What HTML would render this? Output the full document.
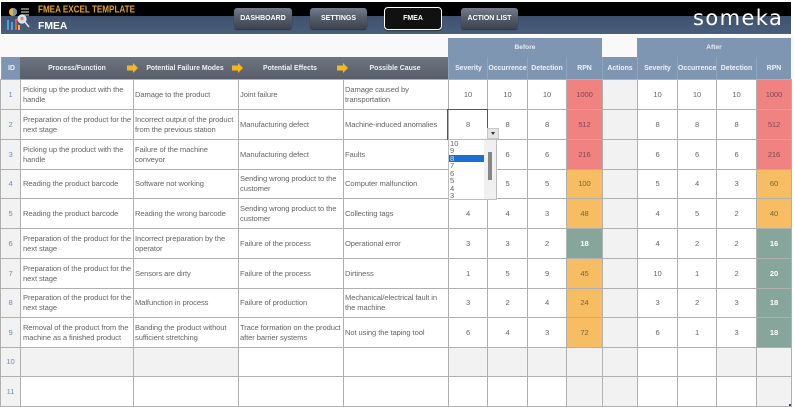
<!DOCTYPE html>
<html><head><meta charset="utf-8"><style>
html,body{margin:0;padding:0;background:#fff}
#r{position:relative;width:794px;height:407px;overflow:hidden;background:#fff;font-family:"Liberation Sans",sans-serif;filter:blur(.3px)}
#r div,#r span{position:absolute}
.bt{height:21px;border-radius:3px;background:linear-gradient(#757c8a,#565d6b 45%,#3d4350);color:#fff;font-weight:bold;font-size:7px;line-height:21px;text-align:center;box-shadow:0 1px 1px #2c3440}
table{position:absolute;left:0;top:79px;width:791px;border-collapse:collapse;table-layout:fixed;font-size:7.6px;letter-spacing:-.1px;line-height:10px;color:#666}
td{border:1px solid #b0b0b0;padding:0 0 0 1px;background:#fff;overflow:hidden;white-space:nowrap}
td:nth-child(2){padding-left:2px}
td.c{text-align:center;padding:0}
td.g{background:#f2f2f2}
td.i{text-align:center;padding:0;background:#f2f2f2;color:#6f8abd}
td.R{background:#f18282;color:#7a4b52;text-align:center;padding:0}
td.O{background:#f6bd62;color:#77663c;text-align:center;padding:0}
td.N{background:#86a59b;color:#fff;text-align:center;padding:0;font-weight:bold}
.h{top:57px;height:23px;line-height:24px;font-size:6.9px;font-weight:bold;text-align:center;color:#eef1f6;white-space:nowrap}
.hd{background:linear-gradient(#6d7480,#565d6a)}
.hb{background:#7f96b2;border-left:1px solid #90a4bc}
.b2{top:38px;height:19px;line-height:19px;background:#7f96b2;color:#e6ebf2;font-size:6.6px;font-weight:bold;text-align:center}
.li{left:450px;font-size:7.6px;line-height:8px;color:#666}
</style></head><body><div id="r">
<div style="left:0;top:35px;width:794px;height:44px;background:#f9f9f9"></div>
<div style="left:1px;top:2px;width:790px;height:14px;background:#000"></div>
<div style="left:1px;top:16px;width:790px;height:18px;background:linear-gradient(#3e5270,#4a5f7c)"></div>
<svg style="position:absolute;left:6px;top:5px" width="26" height="28" viewBox="0 0 26 28">
<circle cx="7" cy="7" r="4" fill="#f0b040"/><path d="M7 7V3a4 4 0 0 1 0 8z" fill="#5a9bd8"/>
<path d="M15 4h8M15 7h8M15 10h8" stroke="#9a9a8a" stroke-width="1.5"/>
<path d="M2 15v10" stroke="#4aa3df" stroke-width="2"/><path d="M6 17v8" stroke="#4aa3df" stroke-width="2"/><path d="M10 14v11" stroke="#e05a4a" stroke-width="2"/>
<circle cx="16" cy="14" r="4" fill="#cfe0ee" stroke="#e8e8e8" stroke-width="1.2"/><circle cx="16" cy="13.5" r="1.6" fill="#e08a70"/>
<path d="M19 17l4 5" stroke="#e0e0e0" stroke-width="1.6"/><path d="M13 25v-5" stroke="#f0b040" stroke-width="2"/>
</svg>
<div style="left:38px;top:4px;font-size:8.1px;line-height:11px;font-weight:bold;color:#dfa22a;white-space:nowrap;transform:scaleY(1.2)">FMEA EXCEL TEMPLATE</div>
<div style="left:38px;top:21px;font-size:10.4px;line-height:12px;font-weight:bold;color:#fff">FMEA</div>
<div class="bt" style="left:234px;top:8px;width:58px">DASHBOARD</div>
<div class="bt" style="left:310px;top:8px;width:57px">SETTINGS</div>
<div class="bt" style="left:384px;top:7px;width:56px;height:21px;border:1.5px solid #fff;background:#111;border-radius:4px">FMEA</div>
<div class="bt" style="left:461px;top:8px;width:57px">ACTION LIST</div>
<div style="left:693px;top:3px;font-family:'DejaVu Sans',sans-serif;font-size:21px;line-height:30px;color:#fff;letter-spacing:1.4px;white-space:nowrap">someka</div>

<div class="b2" style="left:448px;width:154px">Before</div>
<div class="b2" style="left:637px;width:154px">After</div>
<div class="h hb" style="left:1px;width:19px">ID</div>
<div class="h hd" style="left:20px;width:428px"></div>
<div class="h" style="left:21px;width:112px">Process/Function</div>
<div class="h" style="left:140px;width:90px">Potential Failure Modes</div>
<div class="h" style="left:245px;width:90px">Potential Effects</div>
<div class="h" style="left:350px;width:90px">Possible Cause</div>
<svg style="position:absolute;left:127px;top:63px" width="12" height="10"><path d="M0 2.5h6V0l5 5-5 5V7.500H0z" fill="#f5b81c"/></svg>
<svg style="position:absolute;left:232px;top:63px" width="12" height="10"><path d="M0 2.5h6V0l5 5-5 5V7.500H0z" fill="#f5b81c"/></svg>
<svg style="position:absolute;left:337px;top:63px" width="12" height="10"><path d="M0 2.5h6V0l5 5-5 5V7.500H0z" fill="#f5b81c"/></svg>
<div class="h hb" style="left:448px;width:39px">Severity</div>
<div class="h hb" style="left:487px;width:39px">Occurrence</div>
<div class="h hb" style="left:527px;width:38px">Detection</div>
<div class="h hb" style="left:566px;width:35px">RPN</div>
<div class="h hb" style="left:602px;width:34px">Actions</div>
<div class="h hb" style="left:637px;width:39px">Severity</div>
<div class="h hb" style="left:677px;width:38px">Occurrence</div>
<div class="h hb" style="left:716px;width:39px">Detection</div>
<div class="h hb" style="left:756px;width:34px">RPN</div>

<table>
<colgroup><col style="width:20px"><col style="width:113px"><col style="width:105px"><col style="width:105px"><col style="width:105px"><col style="width:39px"><col style="width:40px"><col style="width:39px"><col style="width:36px"><col style="width:35px"><col style="width:40px"><col style="width:39px"><col style="width:40px"><col style="width:35px"></colgroup>
<tr style="height:30px"><td class="i">1</td><td>Picking up the product with the<br>handle</td><td>Damage to the product</td><td>Joint failure</td><td>Damage caused by<br>transportation</td><td class="c">10</td><td class="c">10</td><td class="c">10</td><td class="R">1000</td><td class="g"></td><td class="c">10</td><td class="c">10</td><td class="c">10</td><td class="R">1000</td></tr>
<tr style="height:30px"><td class="i">2</td><td>Preparation of the product for the<br>next stage</td><td>Incorrect output of the product<br>from the previous station</td><td>Manufacturing defect</td><td>Machine-induced anomalies</td><td class="c">8</td><td class="c">8</td><td class="c">8</td><td class="R">512</td><td class="g"></td><td class="c">8</td><td class="c">8</td><td class="c">8</td><td class="R">512</td></tr>
<tr style="height:30px"><td class="i">3</td><td>Picking up the product with the<br>handle</td><td>Failure of the machine<br>conveyor</td><td>Manufacturing defect</td><td>Faults</td><td class="c">6</td><td class="c">6</td><td class="c">6</td><td class="R">216</td><td class="g"></td><td class="c">6</td><td class="c">6</td><td class="c">6</td><td class="R">216</td></tr>
<tr style="height:29px"><td class="i">4</td><td>Reading the product barcode</td><td>Software not working</td><td>Sending wrong product to the<br>customer</td><td>Computer malfunction</td><td class="c">5</td><td class="c">5</td><td class="c">5</td><td class="O">100</td><td class="g"></td><td class="c">5</td><td class="c">4</td><td class="c">3</td><td class="O">60</td></tr>
<tr style="height:30px"><td class="i">5</td><td>Reading the product barcode</td><td>Reading the wrong barcode</td><td>Sending wrong product to the<br>customer</td><td>Collecting tags</td><td class="c">4</td><td class="c">4</td><td class="c">3</td><td class="O">48</td><td class="g"></td><td class="c">4</td><td class="c">5</td><td class="c">2</td><td class="O">40</td></tr>
<tr style="height:30px"><td class="i">6</td><td>Preparation of the product for the<br>next stage</td><td>Incorrect preparation by the<br>operator</td><td>Failure of the process</td><td>Operational error</td><td class="c">3</td><td class="c">3</td><td class="c">2</td><td class="N">18</td><td class="g"></td><td class="c">4</td><td class="c">2</td><td class="c">2</td><td class="N">16</td></tr>
<tr style="height:30px"><td class="i">7</td><td>Preparation of the product for the<br>next stage</td><td>Sensors are dirty</td><td>Failure of the process</td><td>Dirtiness</td><td class="c">1</td><td class="c">5</td><td class="c">9</td><td class="O">45</td><td class="g"></td><td class="c">10</td><td class="c">1</td><td class="c">2</td><td class="N">20</td></tr>
<tr style="height:29px"><td class="i">8</td><td>Preparation of the product for the<br>next stage</td><td>Malfunction in process</td><td>Failure of production</td><td>Mechanical/electrical fault in<br>the machine</td><td class="c">3</td><td class="c">2</td><td class="c">4</td><td class="O">24</td><td class="g"></td><td class="c">3</td><td class="c">2</td><td class="c">3</td><td class="N">18</td></tr>
<tr style="height:30px"><td class="i">9</td><td>Removal of the product from the<br>machine as a finished product</td><td>Banding the product without<br>sufficient stretching</td><td>Trace formation on the product<br>after barrier systems</td><td>Not using the taping tool</td><td class="c">6</td><td class="c">4</td><td class="c">3</td><td class="O">72</td><td class="g"></td><td class="c">6</td><td class="c">1</td><td class="c">3</td><td class="N">18</td></tr>
<tr style="height:29px"><td class="i">10</td><td class="g"></td><td class="g"></td><td></td><td></td><td class="g"></td><td class="g"></td><td class="g"></td><td class="g"></td><td class="g"></td><td></td><td></td><td class="g"></td><td class="g"></td></tr>
<tr style="height:30px"><td class="i">11</td><td></td><td></td><td></td><td></td><td></td><td></td><td></td><td class="g"></td><td class="g"></td><td></td><td></td><td></td><td class="g"></td></tr>
</table>

<div style="left:447px;top:109px;width:39px;height:29px;border:1px solid #2f6b4a"></div>
<div style="left:487px;top:128px;width:12px;height:11px;background:#e4e4e4;border:1px solid #c8c8c8;box-sizing:border-box"></div>
<div style="left:491px;top:132px;width:0;height:0;border-left:2px solid transparent;border-right:2px solid transparent;border-top:3px solid #333"></div>
<div style="left:448px;top:139px;width:49px;height:61px;background:#fff;border:1px solid #bdbdbd;box-sizing:border-box"></div>
<div style="left:484px;top:140px;width:12px;height:59px;background:#f0f0f0"></div>
<div style="left:488px;top:152px;width:4px;height:28px;background:#868686"></div>
<div style="left:449px;top:155px;width:35px;height:7px;background:#1a6fd2"></div>
<div class="li" style="top:140px">10</div>
<div class="li" style="top:147px">9</div>
<div class="li" style="top:155px;color:#cfe0f5">8</div>
<div class="li" style="top:162px">7</div>
<div class="li" style="top:170px">6</div>
<div class="li" style="top:177px">5</div>
<div class="li" style="top:185px">4</div>
<div class="li" style="top:192px">3</div>
<div style="left:789px;top:404px;width:2px;height:2px;background:#2a4f8a"></div>
</div></body></html>
